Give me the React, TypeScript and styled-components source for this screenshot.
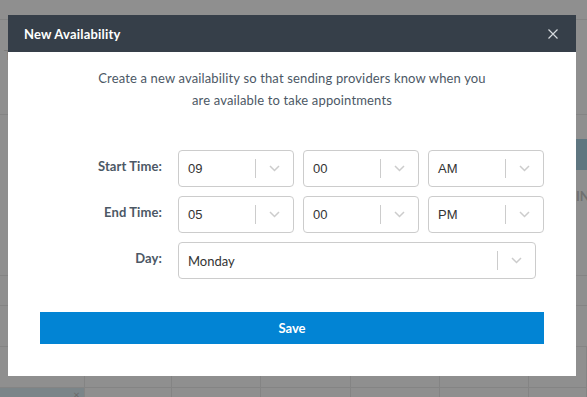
import React from "react";
import styled, { createGlobalStyle } from "styled-components";

const Global = createGlobalStyle`
  html, body { margin: 0; padding: 0; }
  body { font-family: Lato, "Open Sans", sans-serif; background: #8f8f8f; }
  * { box-sizing: border-box; }
`;

const Page = styled.div`
  position: relative;
  width: 587px;
  height: 397px;
  overflow: hidden;
  background: #8f8f8f;
`;

const BgRow = styled.div<{ $h: number }>`
  height: ${(p) => p.$h}px;
  border-bottom: 1px solid #848484;
  position: relative;
  display: flex;
`;

const BgLetter = styled.span`
  font-family: Lato, sans-serif;
  font-size: 14px;
  color: #7c7c7c;
  padding: 26px 0 0 4px;
`;

const BgSide = styled.div`
  margin-left: auto;
  width: 11px;
  display: flex;
  flex-direction: column;
  padding-top: 24px;
  gap: 18px;
  overflow: hidden;
`;

const BgButton = styled.div`
  height: 31px;
  background: #5f7680;
`;

const BgText = styled.span`
  font-family: Lato, sans-serif;
  font-weight: 700;
  font-size: 13px;
  color: #707070;
  white-space: nowrap;
`;

const BgCells = styled.div`
  display: grid;
  grid-template-columns: 85px 87px 89px 90px 89px 89px 1fr;
  height: 100%;
  width: 100%;
`;

const BgCell = styled.div<{ $tint?: boolean }>`
  border-right: 1px solid #848484;
  background: ${(p) => (p.$tint ? "#7b8589" : "transparent")};
  display: flex;
  justify-content: flex-end;
  align-items: flex-start;
  color: #6a6a6a;
  font-size: 12px;
  line-height: 10px;
  padding-right: 4px;
  padding-top: 2px;
  overflow: hidden;
`;

const Overlay = styled.div`
  position: absolute;
  inset: 0;
  padding: 15px 11px 0 8px;
`;

const Modal = styled.div`
  width: 568px;
  height: 361px;
  background: #ffffff;
  display: flex;
  flex-direction: column;
`;

const Header = styled.div`
  height: 37px;
  background: #363f49;
  display: flex;
  align-items: center;
  justify-content: space-between;
  padding: 0 18px 0 16px;
`;

const Title = styled.h2`
  margin: 0;
  font-family: Lato, sans-serif;
  font-size: 13px;
  font-weight: 700;
  letter-spacing: 0.2px;
  color: #ffffff;
`;

const Close = styled.button`
  border: 0;
  background: none;
  padding: 0;
  width: 10px;
  height: 10px;
  display: flex;
  cursor: pointer;
`;

const Body = styled.div`
  padding: 15px 32px 32px;
  display: flex;
  flex-direction: column;
`;

const Description = styled.p`
  margin: 0;
  text-align: center;
  font-family: Lato, sans-serif;
  font-size: 13px;
  letter-spacing: 0.15px;
  line-height: 22px;
  color: #4c5865;
`;

const Form = styled.div`
  margin-top: 39px;
  display: grid;
  grid-template-columns: 122px 1fr;
  column-gap: 16px;
  row-gap: 9px;
`;

const Label = styled.label`
  text-align: right;
  font-family: Lato, sans-serif;
  font-weight: 700;
  font-size: 13px;
  letter-spacing: 0.1px;
  line-height: 18px;
  padding-top: 7px;
  color: #4c5865;
`;

const Controls = styled.div<{ $single?: boolean }>`
  display: grid;
  grid-template-columns: ${(p) => (p.$single ? "1fr" : "1fr 1fr 1fr")};
  gap: 9px;
  padding-right: ${(p) => (p.$single ? 8 : 0)}px;
`;

const SelectBox = styled.div`
  height: 37px;
  border: 1px solid #cccccc;
  border-radius: 4px;
  display: flex;
  align-items: center;
  background: #fff;
`;

const Value = styled.span<{ $sans?: boolean }>`
  flex: 1;
  padding-left: 9px;
  font-family: ${(p) => (p.$sans ? "Lato, sans-serif" : '"Liberation Sans", Arial, sans-serif')};
  font-size: 13px;
  color: #333333;
`;

const Separator = styled.span`
  width: 1px;
  height: 19px;
  background: #cccccc;
`;

const Indicator = styled.span`
  width: 37px;
  display: flex;
  justify-content: center;
  align-items: center;
`;

const SaveButton = styled.button`
  margin-top: 33px;
  height: 32px;
  border: 0;
  background: #0284d4;
  color: #ffffff;
  font-family: Lato, sans-serif;
  font-weight: 700;
  font-size: 13px;
  cursor: pointer;
`;

const Chevron = () => (
  <svg width="11" height="7" viewBox="0 0 11 7">
    <polyline points="1,1 5.5,5.5 10,1" fill="none" stroke="#cccccc" strokeWidth="1.5" />
  </svg>
);

const Select = ({ value, sans }: { value: string; sans?: boolean }) => (
  <SelectBox>
    <Value $sans={sans}>{value}</Value>
    <Separator />
    <Indicator>
      <Chevron />
    </Indicator>
  </SelectBox>
);

export default function App() {
  return (
    <Page>
      <Global />
      <BgRow $h={20} />
      <BgRow $h={95}>
        <BgLetter>T</BgLetter>
      </BgRow>
      <BgRow $h={161}>
        <BgSide>
          <BgButton />
          <BgText>IN</BgText>
        </BgSide>
      </BgRow>
      <BgRow $h={30} />
      <BgRow $h={41} />
      <BgRow $h={41}>
        <BgCells>
          {[0, 1, 2, 3, 4, 5, 6].map((i) => (
            <BgCell key={i} />
          ))}
        </BgCells>
      </BgRow>
      <BgRow $h={20}>
        <BgCells>
          {[0, 1, 2, 3, 4, 5, 6].map((i) => (
            <BgCell key={i} $tint={i === 0}>
              {i === 0 ? "×" : ""}
            </BgCell>
          ))}
        </BgCells>
      </BgRow>
      <Overlay>
        <Modal>
          <Header>
            <Title>New Availability</Title>
            <Close aria-label="Close">
              <svg width="10" height="10" viewBox="0 0 10 10">
                <path d="M0.5 0.5 L9.5 9.5 M9.5 0.5 L0.5 9.5" stroke="#d5d9dd" strokeWidth="1.2" />
              </svg>
            </Close>
          </Header>
          <Body>
            <Description>
              Create a new availability so that sending providers know when you
              <br />
              are available to take appointments
            </Description>
            <Form>
              <Label>Start Time:</Label>
              <Controls>
                <Select value="09" />
                <Select value="00" />
                <Select value="AM" />
              </Controls>
              <Label>End Time:</Label>
              <Controls>
                <Select value="05" />
                <Select value="00" />
                <Select value="PM" />
              </Controls>
              <Label>Day:</Label>
              <Controls $single>
                <Select value="Monday" sans />
              </Controls>
            </Form>
            <SaveButton>Save</SaveButton>
          </Body>
        </Modal>
      </Overlay>
    </Page>
  );
}
